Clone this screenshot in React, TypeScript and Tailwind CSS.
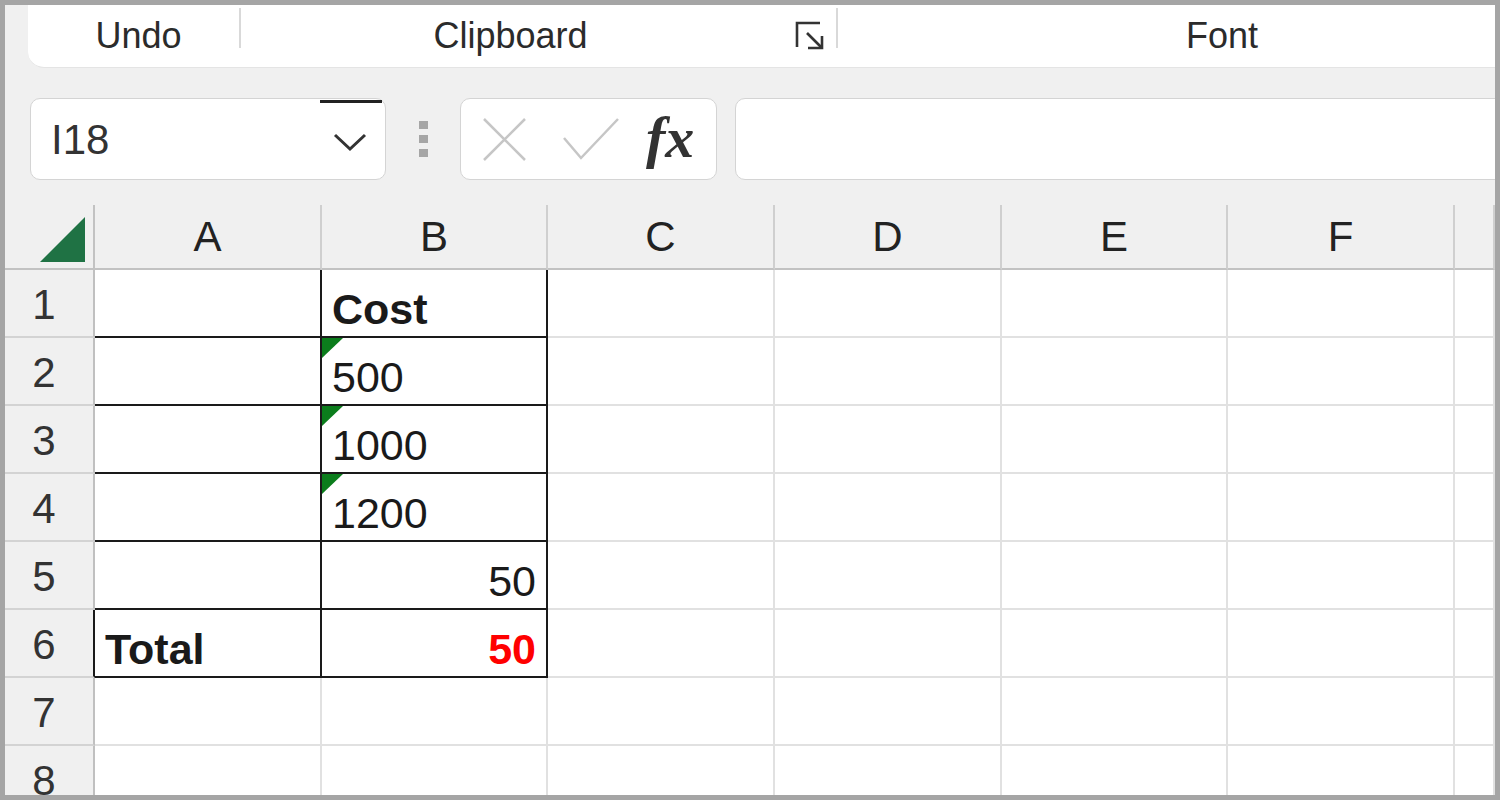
import React from "react";

type Cell = {
  text: string;
  bold?: boolean;
  right?: boolean;
  red?: boolean;
  flag?: boolean;
};

type Row = { n: number; a?: Cell; b?: Cell };

const columns = ["A", "B", "C", "D", "E", "F", ""];

const rows: Row[] = [
  { n: 1, b: { text: "Cost", bold: true } },
  { n: 2, b: { text: "500", flag: true } },
  { n: 3, b: { text: "1000", flag: true } },
  { n: 4, b: { text: "1200", flag: true } },
  { n: 5, b: { text: "50", right: true } },
  { n: 6, a: { text: "Total", bold: true }, b: { text: "50", bold: true, right: true, red: true } },
  { n: 7 },
  { n: 8 },
];

const Ribbon = () => (
  <div className="ml-[23px] h-[63px] shrink-0 bg-white rounded-bl-[16px] border-b border-[#e4e4e4] flex items-center overflow-hidden text-[36px] text-[#2b2b2b]">
    <div className="w-[211px] shrink-0 pl-[10px] text-center">Undo</div>
    <div className="w-[2px] h-[40px] shrink-0 self-start mt-[3px] bg-[#d9d9d9]" />
    <div className="w-[539px] shrink-0 text-center">Clipboard</div>
    <svg className="ml-[15px] shrink-0" width="30" height="30" viewBox="0 0 30 30" fill="none" stroke="#333" strokeWidth="2.6">
      <path d="M2 26 V2 H25" />
      <path d="M12 12 L26 26" />
      <path d="M13 27 H27 V15" />
    </svg>
    <div className="w-[11px] shrink-0" />
    <div className="w-[2px] h-[40px] shrink-0 self-start mt-[3px] bg-[#d9d9d9]" />
    <div className="w-[768px] shrink-0 text-center">Font</div>
  </div>
);

const FormulaRow = () => (
  <div className="mt-[30px] h-[82px] shrink-0 flex">
    <div className="ml-[25px] w-[356px] shrink-0 h-full bg-white rounded-[10px] border-[1.5px] border-[#d4d4d4] relative flex items-center pl-[20px] pr-[18px]">
      <div className="absolute top-[1px] left-[289px] w-[62px] h-[3px] bg-[#222]" />
      <span className="flex-1 text-[42px] text-[#333]">I18</span>
      <svg className="mt-[6px]" width="34" height="20" viewBox="0 0 34 20" fill="none" stroke="#333" strokeWidth="3">
        <path d="M2 3 L17 17 L32 3" />
      </svg>
    </div>

    {/* drag handle */}
    <div className="ml-[33px] w-[9px] shrink-0 flex flex-col justify-center gap-[6px]">
      <div className="w-[9px] h-[8px] bg-[#a6a6a6]" />
      <div className="w-[9px] h-[8px] bg-[#a6a6a6]" />
      <div className="w-[9px] h-[8px] bg-[#a6a6a6]" />
    </div>

    <div className="ml-[32px] w-[257px] shrink-0 h-full bg-white rounded-[10px] border-[1.5px] border-[#d4d4d4] flex items-center pl-[22px]">
      <svg width="43" height="43" viewBox="0 0 43 43" fill="none" stroke="#c6c6c6" strokeWidth="2.5">
        <path d="M1 1 L42 42 M42 1 L1 42" />
      </svg>
      <svg className="ml-[37px]" width="56" height="42" viewBox="0 0 56 42" fill="none" stroke="#c6c6c6" strokeWidth="2.5">
        <path d="M1 20 L18 40 L55 1" />
      </svg>
      <span className="ml-[27px] mb-[2px] text-[58px] leading-none italic font-bold text-[#333] font-['Liberation_Serif',serif]">
        fx
      </span>
    </div>

    <div className="ml-[18px] flex-1 -mr-[20px] h-full bg-white rounded-[10px] border-[1.5px] border-[#d4d4d4]" />
  </div>
);

const DataCell = ({ cell, black }: { cell?: Cell; black: boolean }) => (
  <div
    className={
      "relative flex items-end pb-[5px] px-[10px] border-r-2 border-b-2 bg-white text-[43px] leading-none " +
      (black ? "border-[#1a1a1a] " : "border-[#e1e1e1] ") +
      (cell?.right ? "justify-end " : "")
    }
  >
    {cell?.flag && (
      <svg className="absolute top-0 left-0" width="21" height="20" viewBox="0 0 21 20">
        <path d="M0 0 H21 L0 20 Z" fill="#0b7d1c" />
      </svg>
    )}
    {cell && (
      <span className={(cell.bold ? "font-bold " : "") + (cell.red ? "text-[#ff0000]" : "text-[#1a1a1a]")}>
        {cell.text}
      </span>
    )}
  </div>
);

const Sheet = () => (
  <div className="mt-[25px] flex-1 min-h-0 grid grid-cols-[90px_227px_226px_227px_227px_226px_227px_1fr] auto-rows-[68px] grid-rows-[65px] overflow-hidden">
    <div className="h-[65px] flex items-end justify-end pr-[8px] pb-[6px] border-r-2 border-b-2 border-[#c2c2c2] bg-[#f0f0f0]">
      <svg width="45" height="45" viewBox="0 0 45 45">
        <path d="M45 0 V45 H0 Z" fill="#1f7244" />
      </svg>
    </div>
    {columns.map((c, i) => (
      <div
        key={i}
        className="h-[65px] flex items-center justify-center border-r-2 border-b-2 border-r-[#cfcfcf] border-b-[#c2c2c2] bg-[#f0f0f0] text-[42px] text-[#222]"
      >
        {c}
      </div>
    ))}

    {rows.map((r) => {
      const inBox = r.n <= 6;
      return (
        <React.Fragment key={r.n}>
          <div
            className={
              "flex items-start justify-center pr-[10px] pt-[14px] border-r-2 border-b-2 border-b-[#d3d3d3] bg-[#f0f0f0] text-[42px] leading-none text-[#333] " +
              (r.n === 6 ? "border-r-[#1a1a1a]" : "border-r-[#c0c0c0]")
            }
          >
            {r.n}
          </div>
          <DataCell cell={r.a} black={inBox} />
          <DataCell cell={r.b} black={inBox} />
          <DataCell black={false} />
          <DataCell black={false} />
          <DataCell black={false} />
          <DataCell black={false} />
          <DataCell black={false} />
        </React.Fragment>
      );
    })}
  </div>
);

export default function App() {
  return (
    <div className="w-[1500px] h-[800px] bg-[#a5a5a5] p-[5px] font-['Liberation_Sans',Arial,sans-serif]">
      <div className="w-full h-full bg-[#f0f0f0] flex flex-col overflow-hidden">
        <Ribbon />
        <FormulaRow />
        <Sheet />
      </div>
    </div>
  );
}
